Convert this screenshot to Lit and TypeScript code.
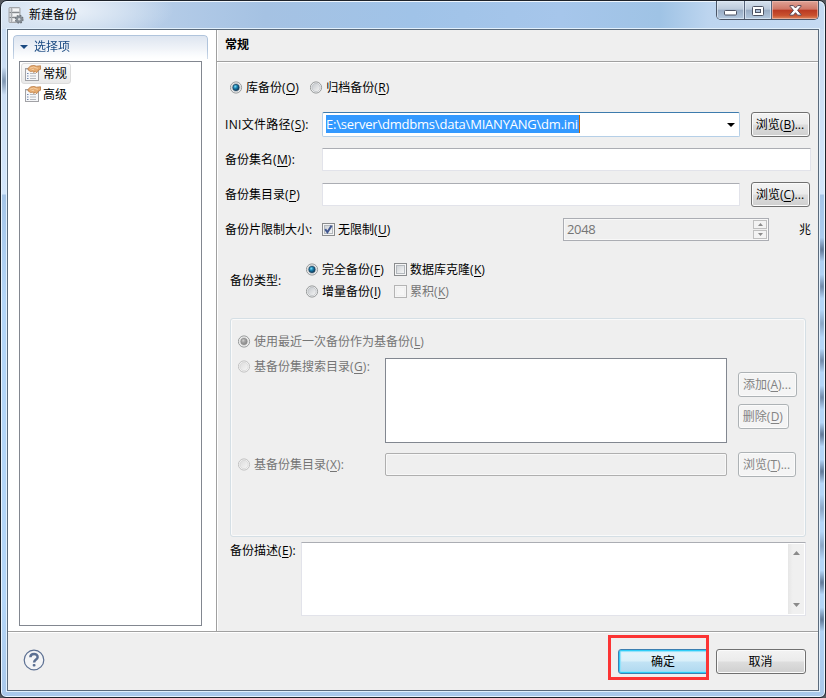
import { LitElement, html, css, svg } from "lit";
import { customElement, property } from "lit/decorators.js";

const baseText = css`
  :host {
    font-family: "Open Sans", "Noto Sans CJK SC", sans-serif;
    font-size: 12px;
    line-height: 18px;
    color: #000;
    white-space: nowrap;
  }
  * { box-sizing: border-box; }
`;

@customElement("mnemonic-text")
class MnemonicText extends LitElement {
  @property() text = "";
  @property() key = "";
  @property() tail = "";
  static styles = css`
    :host { display: inline-block; white-space: nowrap; }
    .hint { letter-spacing: .4px; }
    u { letter-spacing: 0; text-underline-offset: 2px; text-decoration-thickness: 1px; text-decoration-skip-ink: none; }
  `;
  render() {
    return this.tail === "..."
      ? html`${this.text}(<u>${this.key}</u>)${this.tail}`
      : html`${this.text}<span class="hint">(</span><u>${this.key}</u><span class="hint">)${this.tail}</span>`;
  }
}

@customElement("choice-item")
class ChoiceItem extends LitElement {
  @property() kind = "radio";
  @property() text = "";
  @property() key = "";
  @property() tail = "";
  @property({ type: Boolean }) checked = false;
  @property({ type: Boolean, reflect: true }) disabled = false;
  static styles = css`
    :host { display: inline-flex; align-items: center; height: 18px; flex: none; }
    :host([disabled]) { color: #757575; }
    svg { display: block; flex: none; margin: -1px 3px 0 0; }
    svg.box { margin-top: -1px; }
  `;
  radio() {
    const off = this.disabled;
    return html`<svg width="13" height="13" viewBox="0 0 13 13">
      <defs>
        <radialGradient id="dot" cx=".38" cy=".35" r=".7">
          <stop offset="0" stop-color=${off ? "#d0d0d0" : "#7fe0f8"}></stop>
          <stop offset=".4" stop-color=${off ? "#a4a4a4" : "#1d85b4"}></stop>
          <stop offset="1" stop-color=${off ? "#858585" : "#0a2e4d"}></stop>
        </radialGradient>
        <linearGradient id="dish" x1="0" y1="0" x2="1" y2="1">
          <stop offset="0" stop-color=${off ? "#dcdcdc" : "#c3c7cb"}></stop>
          <stop offset="1" stop-color="#f6f6f6"></stop>
        </linearGradient>
      </defs>
      <circle cx="6" cy="6.5" r="5.6" fill="#f8f8f8" stroke=${off && !this.checked ? "#bcbcbc" : "#8b8e90"} stroke-width=".9"></circle>
      <circle cx="6" cy="6.5" r="4.2" fill="url(#dish)" stroke=${off ? "#d2d2d2" : "#b5b9bd"} stroke-width=".7"></circle>
      ${this.checked ? svg`<circle cx="6" cy="6.5" r="3.2" fill="url(#dot)" stroke=${off ? "#8c8c8c" : "#1b4562"} stroke-width=".7"></circle>` : null}
    </svg>`;
  }
  box() {
    const off = this.disabled;
    return html`<svg class="box" width="13" height="13" viewBox="0 0 13 13">
      <defs>
        <linearGradient id="well" x1="0" y1="0" x2="1" y2="1">
          <stop offset="0" stop-color=${off ? "#f3f3f3" : "#cdd1d5"}></stop>
          <stop offset="1" stop-color="#f7f7f7"></stop>
        </linearGradient>
      </defs>
      <rect x=".5" y=".5" width="12" height="12" fill="#f5f5f5" stroke=${off ? "#b4b4b4" : "#8a8c8e"}></rect>
      <rect x="2.5" y="2.5" width="8" height="8" fill="url(#well)" stroke=${off ? "#f0f0f0" : "#b3b8bd"}></rect>
      ${this.checked ? svg`<path d="M3.2 6.2 L5.4 9.3 L9.6 2.6" fill="none" stroke="#41578f" stroke-width="2"></path>` : null}
    </svg>`;
  }
  render() {
    return html`${this.kind === "radio" ? this.radio() : this.box()}
      <mnemonic-text .text=${this.text} .key=${this.key} .tail=${this.tail}></mnemonic-text>`;
  }
}

@customElement("push-button")
class PushButton extends LitElement {
  @property({ type: Boolean, reflect: true }) disabled = false;
  @property({ type: Boolean, reflect: true }) primary = false;
  static styles = css`
    :host {
      display: flex; align-items: center; justify-content: center; flex: none; box-sizing: border-box;
      height: 25px; border: 1px solid #707070; border-radius: 3px; padding-right: 1px;
      background: linear-gradient(#f3f3f3 0, #ebebeb 48%, #dddddd 52%, #cfcfcf 100%);
      box-shadow: inset 0 0 0 1px #fbfbfb;
    }
    :host([disabled]) { border-color: #adb2b5; background: #f4f4f4; color: #838383; }
    :host([primary]) {
      border-color: #3c7fb1;
      background: linear-gradient(#e6f4fb 0, #d9eff9 48%, #c2e3f5 52%, #afd8ef 100%);
      box-shadow: inset 0 0 0 1px #2fcdf7, inset 0 0 1px 2px #8fe1fa;
    }
  `;
  render() { return html`<slot></slot>`; }
}

@customElement("app-root")
class AppRoot extends LitElement {
  static styles = [baseText, css`
    :host { display: block; width: 826px; height: 698px; background: #55585e; overflow: hidden; }
    .window {
      width: 826px; height: 698px; display: flex; flex-direction: column; position: relative;
      border: 1px solid #1d222a; border-radius: 7px 7px 6px 6px; padding: 0 6px 6px;
      box-shadow: inset 0 0 0 1px #e9f4fe;
      background:
        radial-gradient(ellipse 9px 12px at 50% 50%, #5f7795, transparent) 818px 230px / 6px 37px no-repeat,
        radial-gradient(ellipse 9px 12px at 50% 50%, #6f88a7, transparent) 818px 267px / 6px 37px no-repeat,
        radial-gradient(ellipse 9px 14px at 50% 50%, #8aa5c4, transparent) 818px 304px / 6px 37px no-repeat,
        radial-gradient(ellipse 9px 12px at 50% 50%, #6f88a7, transparent) 818px 341px / 6px 37px no-repeat,
        radial-gradient(ellipse 9px 12px at 50% 50%, #6f88a7, transparent) 818px 378px / 6px 37px no-repeat,
        radial-gradient(ellipse 9px 12px at 50% 50%, #5f7795, transparent) 818px 415px / 6px 37px no-repeat,
        radial-gradient(ellipse 9px 12px at 50% 50%, #5f7795, transparent) 818px 452px / 6px 37px no-repeat,
        radial-gradient(ellipse 9px 14px at 50% 50%, #8aa5c4, transparent) 818px 489px / 6px 37px no-repeat,
        radial-gradient(ellipse 9px 14px at 50% 50%, #8aa5c4, transparent) 818px 526px / 6px 37px no-repeat,
        radial-gradient(ellipse 9px 12px at 50% 50%, #5f7795, transparent) 818px 563px / 6px 37px no-repeat,
        radial-gradient(ellipse 9px 12px at 50% 50%, #5f7795, transparent) 818px 600px / 6px 37px no-repeat,
        radial-gradient(ellipse 7px 14px at 3px 80px, #7c93ae, transparent) no-repeat,
        linear-gradient(#c8daf0 0, #d3e6fb 193px, #a5c5e8 194px, #b4d6f8 300px, #b4d6f8 600px, #a9c8ea 100%);
    }
    .titlebar {
      height: 28px; margin: 0 -5px; padding: 0 0 1px 6px; flex: none; display: flex; align-items: center;
      border-radius: 6px 6px 0 0;
      background:
        radial-gradient(ellipse 110px 34px at 62px 8px, #edf3fa 0, #dde8f4cc 45%, transparent 100%),
        linear-gradient(90deg, #cfdeef 0, #b6cde8 18%, #a5c2e3 32%, #a0c3e8 50%, #a6c6eb 68%, #9fc3e5 80%, #bdd5ef 86%, #c5daf2 100%);
      border-top: 1px solid #eff6fd;
    }
    .titlebar svg { display: block; }
    .title { margin-left: 5px; }
    .caption { position: absolute; right: 6px; top: 0; display: flex; height: 19px; width: 103px;
      border: 1px solid #4a5566; border-top: 0; border-radius: 0 0 5px 5px; overflow: hidden; }
    .cap { display: flex; align-items: center; justify-content: center; width: 28px; padding-top: 1px;
      background: linear-gradient(#d7e2ee 0, #bccadb 46%, #98abc3 50%, #b4c9df 100%);
      border-right: 1px solid #56637a; box-shadow: inset 0 0 0 1px #e4edf7aa; }
    .cap.min { padding-top: 5px; }
    .cap.mid { width: 27px; }
    .cap.close { flex: 1; border-right: 0;
      background: linear-gradient(#dfa396 0, #cf7666 46%, #b93922 50%, #c9512f 80%, #dd8a5f 100%);
      box-shadow: inset 0 0 0 1px #f0bfb2aa; }
    .client { flex: 1; display: flex; flex-direction: column; background: #efefef; border: 1px solid #5b6b7c;
      box-shadow: 0 0 0 1px #e2f0fc; min-height: 0; }
    .body { display: flex; height: 601px; flex: none; }
    .side { width: 208px; background: #fff; padding: 5px 8px 0 5px; }
    .section { height: 24px; border: 1px solid #b0c4dc; border-bottom: 0; border-radius: 4px 4px 0 0;
      background: linear-gradient(#dde5f0, #fff);
      display: flex; align-items: center; color: #1a4a82; padding: 0 0 2px 6px; gap: 6px;
      -webkit-mask-image: linear-gradient(#000 60%, #0009); }
    .section svg { margin-top: 1px; }
    .tree { margin: 2px 0 0 6px; width: 183px; height: 565px; border: 1px solid #828790; padding: 1px; }
    .node { height: 21px; width: 50px; display: flex; align-items: center; gap: 2px; padding-left: 3px;
      border: 1px solid transparent; border-radius: 3px; }
    .node svg { margin-top: -2px; }
    .node.sel { border-color: #dcdcdc; background: linear-gradient(#fafafa, #e9e9e9); }
    .main { flex: 1; border-left: 1px solid #a0a0a0; box-shadow: inset 1px 0 #fff; min-width: 0; }
    .heading { height: 32px; border-bottom: 1px solid #a0a0a0; box-shadow: 0 1px #fff; padding: 6px 0 0 8px; font-weight: bold; }
    .form { padding: 14px 0 0 8px; }
    .row { display: flex; align-items: center; }
    .r1 { height: 24px; padding-left: 5px; gap: 11px; }
    .r2 { height: 25px; margin-top: 12px; }
    .r3 { height: 23px; margin-top: 11px; }
    .r4 { height: 25px; margin-top: 11px; }
    .r5 { height: 23px; margin-top: 11px; }
    .lab { width: 97px; flex: none; }
    .ini { letter-spacing: .3px; }
    .field { height: 23px; background: #fff; border: 1px solid #e2e3ea; border-top-color: #abadb3; border-radius: 1px; }
    .combo { width: 418px; height: 25px; border: 1px solid #b5cfe7; border-top-color: #3d7bad; background: #fff;
      display: flex; align-items: flex-start; justify-content: space-between; padding: 2px 4px 0 3px; border-radius: 2px; }
    .picked { background: #3399ff; color: #fff; height: 18px; line-height: 18px; width: 254px; border-right: 1px solid #cc6600;
      font-size: 13px; letter-spacing: -.21px; }
    .combo svg { margin-top: 8px; }
    .wide { width: 489px; }
    .dir { width: 418px; }
    .b59 { width: 59px; margin-left: 11px; }
    .limit { width: 241px; display: flex; }
    .spin { width: 206px; height: 23px; border: 1px solid #abadb3; color: #757575; display: flex;
      align-items: center; justify-content: space-between; padding: 0 1px 0 3px; font-size: 13px; letter-spacing: -.35px; line-height: 16px;
      box-shadow: inset 0 0 0 1px #f8f8f8; }
    .spin span { margin-top: -2px; }
    .steps { display: flex; flex-direction: column; gap: 1px; }
    .step { width: 14px; height: 9px; border: 1px solid #bfbfbf; display: flex; align-items: center; justify-content: center; background: #f3f3f3; }
    .unit { margin-left: 30px; }
    .types { height: 44px; margin-top: 18px; padding-left: 5px; }
    .types .lab { width: 76px; }
    .opts { display: grid; grid-template-columns: 88px auto; grid-template-rows: 22px 22px; align-items: center; }
    .group { margin: 15px 0 0 5px; width: 576px; height: 219px; border: 1px solid #d5dfe5; border-radius: 3px;
      box-shadow: inset 0 0 0 1px #fafafa; padding: 14px 0 0 7px; display: flex; flex-direction: column; }
    .g2 { display: grid; grid-template-columns: 147px 342px auto; align-items: start; margin-top: 7px; height: 85px; }
    .list { height: 85px; background: #fff; border: 1px solid #828790; }
    .col { display: flex; flex-direction: column; gap: 7px; padding: 14px 0 0 11px; }
    .add { width: 59px; }
    .del { width: 51px; }
    .g3 { display: grid; grid-template-columns: 147px 342px auto; align-items: center; margin-top: 9px; height: 25px; }
    .ro { height: 23px; border: 1px solid #afafaf; border-radius: 2px; box-shadow: inset 0 0 0 1px #f8f8f8; }
    .brt { width: 58px; margin-left: 11px; }
    .desc { display: flex; margin-top: 5px; padding-left: 5px; }
    .desc .lab { width: 71px; }
    .area { width: 505px; height: 74px; background: #fff; border: 1px solid #e2e3ea; border-top-color: #abadb3; display: flex;
      justify-content: flex-end; padding: 1px; }
    .bar { width: 16px; background: linear-gradient(90deg, #e6e6e6, #f0f0f0 30%, #f0f0f0); display: flex; flex-direction: column;
      justify-content: space-between; align-items: center; padding: 7px 0; }
    .footer { flex: 1; border-top: 1px solid #a0a0a0; box-shadow: inset 0 1px #fff; display: flex; align-items: flex-start;
      padding: 17px 12px 0 15px; }
    .grow { flex: 1; }
    .mark { position: relative; margin-right: 7px; }
    .mark::after { content: ""; box-sizing: border-box; position: absolute; left: -10px; top: -14px; width: 101px; height: 45px; border: 3px solid #fc3434; }
    .b90 { width: 90px; }
    .ok { width: 91px; }
  `];

  serverIcon() {
    return html`<svg width="16" height="17" viewBox="0 0 16 17">
      <rect x="1" y=".5" width="11" height="15" rx=".8" fill="#d3d5d8" stroke="#a2a5a9"></rect>
      <path d="M1.5 5.5h10M1.5 10.5h10" stroke="#85898d"></path>
      <path d="M5 2.8h6M5 7.8h6M5 12.8h4" stroke="#f4f5f6" stroke-width="2.2"></path>
      <path d="M3.5 1v14" stroke="#a9acb0"></path>
      <circle cx="11.2" cy="12.2" r="3.5" fill="#8b929a" stroke="#6a7178" stroke-width="1.8" stroke-dasharray="1.6 1.15"></circle>
      <circle cx="11.2" cy="12.2" r="3.2" fill="#858d95"></circle>
      <circle cx="11.2" cy="12.2" r="1.2" fill="#d3d6d9"></circle>
    </svg>`;
  }

  cardIcon() {
    return html`<svg width="16" height="16" viewBox="0 0 16 16">
      <rect x=".5" y="3.5" width="13" height="12" fill="#f6f7f9" stroke="#a2a2a6"></rect>
      <path d="M1 4.5h12" stroke="#d4d6da"></path>
      <path d="M2 8.5h1.5M2 11h1.5M2 13.5h1.5" stroke="#7087ae"></path>
      <path d="M5 8.5h6M5 11h6M5 13.5h6" stroke="#b6b9be"></path>
      <path d="M3 3.4 L5.5 .9 L9 .5 L11.5 1.2 L15.6 .8 V4.2 L13 5.4 L11.6 7.8 L10.2 6.4 L8.6 7.4 L7.6 6 L5.6 6.6 L3.2 5Z" fill="#e5ab70" stroke="#b8773f" stroke-width=".8"></path>
      <path d="M5 3.2 L8.6 2 L12.8 3.4M6.5 4.8 L9 4.2" fill="none" stroke="#f7d3a8" stroke-width=".9"></path>
    </svg>`;
  }

  tri(up: boolean, color: string, w = 5, h = 3) {
    const d = up ? `M0 ${h}H${w}L${w / 2} 0Z` : `M0 0H${w}L${w / 2} ${h}Z`;
    return html`<svg width=${w} height=${h} viewBox="0 0 ${w} ${h}"><path d=${d} fill=${color}></path></svg>`;
  }

  m(text: string, key: string, tail = "") {
    return html`<mnemonic-text .text=${text} .key=${key} .tail=${tail}></mnemonic-text>`;
  }

  choice(kind: string, text: string, key: string, checked = false, disabled = false, tail = "") {
    return html`<choice-item .kind=${kind} .text=${text} .key=${key} .tail=${tail} .checked=${checked} .disabled=${disabled}></choice-item>`;
  }

  render() {
    return html`<div class="window">
      <div class="titlebar">${this.serverIcon()}<span class="title">新建备份</span></div>
      <div class="caption">
        <div class="cap min"><svg width="13" height="6" viewBox="0 0 13 6"><rect x=".5" y=".5" width="12" height="4.5" rx="1" fill="#fff" stroke="#4d5363"></rect></svg></div>
        <div class="cap mid"><svg width="12" height="10" viewBox="0 0 12 10"><rect x=".5" y=".5" width="11" height="9" rx="1" fill="#fff" stroke="#4d5363"></rect><rect x="3.5" y="3.5" width="5" height="3" fill="#aebfd6" stroke="#4d5363"></rect></svg></div>
        <div class="cap close"><svg width="13" height="11" viewBox="0 0 13 11"><path d="M.9 .6H4.4L6.5 3 8.6 .6H12.1V1.2L8.6 5.3 12.1 9.5V10.2H8.6L6.5 7.7 4.4 10.2H.9V9.5L4.4 5.3 .9 1.2Z" fill="#fff" stroke="#5a4652"></path></svg></div>
      </div>
      <div class="client">
        <div class="body">
          <div class="side">
            <div class="section">${this.tri(false, "#1a4a82", 8, 4)}<span>选择项</span></div>
            <div class="tree">
              <div class="node sel">${this.cardIcon()}<span>常规</span></div>
              <div class="node">${this.cardIcon()}<span>高级</span></div>
            </div>
          </div>
          <div class="main">
            <div class="heading">常规</div>
            <div class="form">
              <div class="row r1">${this.choice("radio", "库备份", "O", true)}${this.choice("radio", "归档备份", "R")}</div>
              <div class="row r2"><span class="lab ini">${this.m("INI文件路径", "S", ":")}</span>
                <div class="combo"><span class="picked">E:\\server\\dmdbms\\data\\MIANYANG\\dm.ini</span>${this.tri(false, "#000", 8, 4)}</div>
                <push-button class="b59">${this.m("浏览", "B", "...")}</push-button></div>
              <div class="row r3"><span class="lab">${this.m("备份集名", "M", ":")}</span><div class="field wide"></div></div>
              <div class="row r4"><span class="lab">${this.m("备份集目录", "P")}</span><div class="field dir"></div>
                <push-button class="b59">${this.m("浏览", "C", "...")}</push-button></div>
              <div class="row r5"><span class="lab">备份片限制大小:</span><div class="limit">${this.choice("check", "无限制", "U", true)}</div>
                <div class="spin"><span>2048</span><div class="steps"><div class="step">${this.tri(true, "#8b8b8b")}</div><div class="step">${this.tri(false, "#8b8b8b")}</div></div></div>
                <span class="unit">兆</span></div>
              <div class="row types"><span class="lab">备份类型:</span>
                <div class="opts">
                  ${this.choice("radio", "完全备份", "F", true)}${this.choice("check", "数据库克隆", "K")}
                  ${this.choice("radio", "增量备份", "I")}${this.choice("check", "累积", "K", false, true)}
                </div></div>
              <div class="group">
                ${this.choice("radio", "使用最近一次备份作为基备份", "L", true, true)}
                <div class="g2">${this.choice("radio", "基备份集搜索目录", "G", false, true, ":")}<div class="list"></div>
                  <div class="col"><push-button class="add" disabled>${this.m("添加", "A", "...")}</push-button>
                    <push-button class="del" disabled>${this.m("删除", "D")}</push-button></div></div>
                <div class="g3">${this.choice("radio", "基备份集目录", "X", false, true, ":")}<div class="ro"></div>
                  <push-button class="brt" disabled>${this.m("浏览", "T", "...")}</push-button></div>
              </div>
              <div class="desc"><span class="lab">${this.m("备份描述", "E", ":")}</span>
                <div class="area"><div class="bar">${this.tri(true, "#8a8a8a", 7, 4)}${this.tri(false, "#8a8a8a", 7, 4)}</div></div></div>
            </div>
          </div>
        </div>
        <div class="footer">
          <svg width="22" height="22" viewBox="0 0 22 22"><circle cx="11" cy="11" r="9.8" fill="#f3f4f6" stroke="#5b6f92" stroke-width="1.2"></circle>
            <path d="M7.4 8.3C7.4 3.9 14.8 4 14.6 8.2C14.5 10.6 11.1 10.6 11.1 13.6" fill="none" stroke="#5b6f92" stroke-width="2.5"></path>
            <rect x="9.7" y="15" width="2.8" height="2.6" rx="1" fill="#5b6f92"></rect></svg>
          <div class="grow"></div>
          <div class="mark"><push-button class="ok" primary>确定</push-button></div>
          <push-button class="b90">取消</push-button>
        </div>
      </div>
    </div>`;
  }
}
